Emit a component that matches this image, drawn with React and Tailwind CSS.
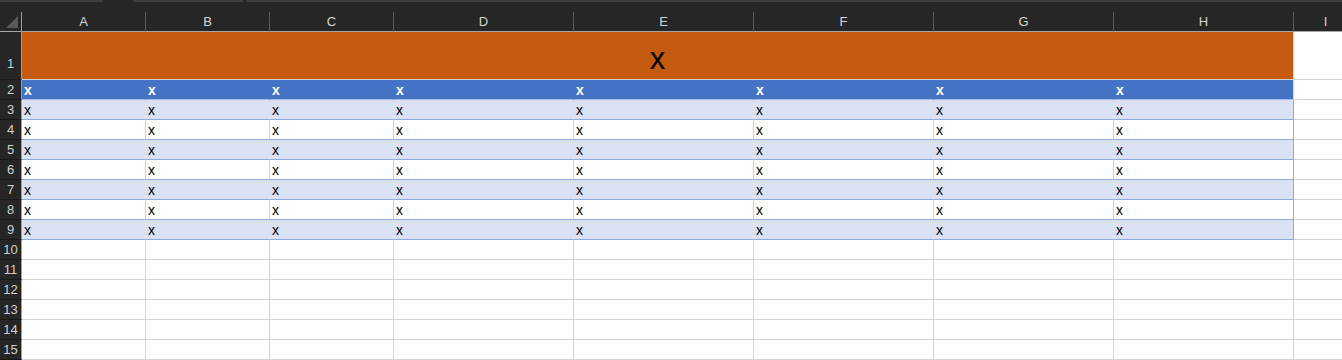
const COLS = ["A", "B", "C", "D", "E", "F", "G", "H", "I"];
const GRID =
  "grid grid-cols-[22px_124px_124px_124px_180px_180px_180px_180px_180px_64px]";

const RowHead = ({ n, tall }) => (
  <div
    className={`flex justify-center bg-[#262626] border-r border-b border-r-[#9e9e9e] border-b-[#181818] text-[13px] leading-[19px] text-[#d0d0d0] ${
      tall ? "items-end pb-[6px]" : "items-start"
    }`}
  >
    {n}
  </div>
);

const TableRow = ({ n }) => {
  const header = n === 2;
  const banded = n % 2 === 1;
  return (
    <div className={`${GRID} h-[20px]`}>
      <RowHead n={n} />
      {COLS.slice(0, 8).map((c, i) => {
        const last = i === 7;
        let cls;
        if (header) {
          cls = `bg-[#4472c4] text-white font-bold border-b-[#a9bde3] ${
            last ? "border-r-[#d4d4d4]" : "border-r-[#4472c4]"
          }`;
        } else if (banded) {
          cls = `bg-[#d9e1f2] text-black border-b-[#8ea9db] ${
            last ? "border-r-[#8ea9db]" : "border-r-[#d9e1f2]"
          }`;
        } else {
          cls = `bg-white text-black border-b-[#8ea9db] ${
            last ? "border-r-[#8ea9db]" : "border-r-[#d4d4d4]"
          }`;
        }
        return (
          <div
            key={c}
            className={`border-r border-b pl-[2px] pt-[1px] text-[14px] leading-[18px] ${cls}`}
          >
            x
          </div>
        );
      })}
      <div className="bg-white border-r border-b border-[#d4d4d4]" />
    </div>
  );
};

const EmptyRow = ({ n }) => (
  <div className={`${GRID} h-[20px]`}>
    <RowHead n={n} />
    {COLS.map((c) => (
      <div key={c} className="bg-white border-r border-b border-[#d4d4d4]" />
    ))}
  </div>
);

export default function App() {
  return (
    <div className="w-[1342px] h-[360px] overflow-hidden bg-white font-['Liberation_Sans',Arial,sans-serif]">
      {/* strip left from the formula bar */}
      <div className="h-[12px] bg-[#262626] flex items-start">
        <div className="w-[103px] h-[2px] bg-[#3d3d3d]" />
        <div className="w-[30px]" />
        <div className="w-[110px] h-[2px] bg-[#3d3d3d]" />
        <div className="w-[3px]" />
        <div className="flex-1 h-[2px] bg-[#3d3d3d]" />
      </div>

      {/* column letters */}
      <div className={`${GRID} h-[20px] bg-[#262626]`}>
        <div className="relative border-r border-b border-r-[#9e9e9e] border-b-[#a6a6a6]">
          <svg
            className="absolute left-[6px] top-[4px]"
            width="12"
            height="12"
            viewBox="0 0 12 12"
          >
            <polygon points="12,0 12,12 0,12" fill="#5a5a5a" />
          </svg>
        </div>
        {COLS.map((c) => (
          <div
            key={c}
            className="flex justify-center border-r border-b border-r-[#5a5a5a] border-b-[#a6a6a6] pt-[1px] text-[13px] leading-[18px] text-[#d6d6d6]"
          >
            {c}
          </div>
        ))}
      </div>

      {/* title row */}
      <div className={`${GRID} h-[48px]`}>
        <RowHead n={1} tall />
        <div className="col-span-8 flex items-end justify-center bg-[#c55a11] border-r border-b border-r-[#d4d4d4] border-b-[#d0d0d0] text-[31px] leading-[40px] text-black">
          x
        </div>
        <div className="bg-white border-r border-b border-[#d4d4d4]" />
      </div>

      {[2, 3, 4, 5, 6, 7, 8, 9].map((n) => (
        <TableRow key={n} n={n} />
      ))}
      {[10, 11, 12, 13, 14, 15].map((n) => (
        <EmptyRow key={n} n={n} />
      ))}
    </div>
  );
}
